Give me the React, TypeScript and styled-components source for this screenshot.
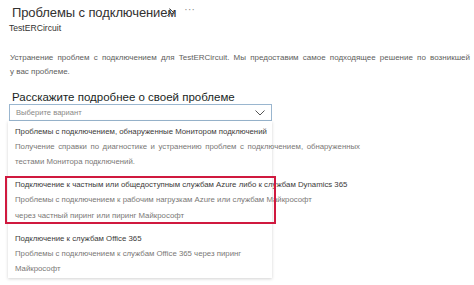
import React from 'react'
import styled, { createGlobalStyle } from 'styled-components'

const GlobalStyle = createGlobalStyle`
   html, body {
      margin: 0;
      padding: 0;
      background: #ffffff;
   }
   body {
      font-family: 'Liberation Sans', Arial, sans-serif;
      color: #323130;
      width: 474px;
      height: 285px;
      overflow: hidden;
   }
`

const Page = styled.div`
   display: flex;
   flex-direction: column;
   padding: 2px 4px 0 10px;
`

const TitleRow = styled.div`
   display: flex;
   align-items: center;
   height: 20px;
   padding-left: 2px;
`

const Title = styled.h1`
   margin: 0;
   font-size: 13px;
   font-weight: 400;
   color: #323130;
   letter-spacing: -0.1px;
`

const PinButton = styled.span`
   display: inline-flex;
   margin-left: -10px;
   margin-top: -1px;
   color: #555;
`

const More = styled.span`
   margin-left: 8px;
   font-size: 10px;
   color: #8a8886;
   letter-spacing: 0.3px;
   line-height: 1;
   margin-top: -4px;
`

const Subtitle = styled.div`
   font-size: 8.6px;
   line-height: 10px;
   color: #323130;
   margin-top: 1px;
   margin-left: -1px;
`

const Description = styled.p`
   margin: 18px 0 0 0;
   font-size: 8px;
   line-height: 14px;
   color: #605e5c;
   width: 460px;
`

const JustifiedLine = styled.span<{ $width?: number }>`
   display: block;
   width: ${(p) => (p.$width ? `${p.$width}px` : 'auto')};
   text-align: justify;
   text-align-last: justify;
   white-space: nowrap;
`

const PlainLine = styled.span`
   display: block;
   white-space: nowrap;
`

const SectionHeading = styled.h2`
   margin: 12px 0 0 2px;
   font-size: 11.5px;
   font-weight: 400;
   color: #201f1e;
   line-height: 13px;
`

const DropdownWrap = styled.div`
   position: relative;
   width: 263px;
   margin-left: -1px;
`

const Select = styled.div`
   box-sizing: border-box;
   height: 17px;
   border: 1px solid #9ab6cf;
   display: flex;
   align-items: center;
   justify-content: space-between;
   padding: 0 6px 0 6px;
   background: #fff;
`

const Placeholder = styled.span`
   font-size: 7.6px;
   color: #8a8886;
`

const Panel = styled.div`
   box-sizing: border-box;
   width: 264px;
   height: 157px;
   margin-left: -1px;
   background: #fff;
   box-shadow: 0 1px 3px rgba(0, 0, 0, 0.18);
   padding: 2.5px 0 0 7px;
   display: flex;
   flex-direction: column;
`

const Option = styled.div`
   display: flex;
   flex-direction: column;
   width: 345px;
   padding-bottom: 7.5px;
`

const OptionTitle = styled.span`
   font-size: 7.8px;
   line-height: 15px;
   color: #3b3a39;
   white-space: nowrap;
`

const OptionText = styled.span`
   font-size: 7.8px;
   line-height: 15.5px;
   color: #7a7876;
`

const Highlight = styled.div`
   position: absolute;
   box-sizing: border-box;
   left: -4px;
   top: 72px;
   width: 271px;
   height: 48px;
   border: 2px solid #d0193f;
   pointer-events: none;
`

const Chevron = () => (
   <svg width="10" height="6" viewBox="0 0 10 6" fill="none">
      <path d="M0.5 0.5L5 5L9.5 0.5" stroke="#555" strokeWidth="1" />
   </svg>
)

const Pin = () => (
   <svg width="10" height="10" viewBox="0 0 10 10" fill="none">
      <path
         d="M3.5 1.5L8.5 6.5M4.3 2.2L3 4.2L5.8 7L7.8 5.7M4.4 5.6L1.3 8.7"
         stroke="#444"
         strokeWidth="1"
      />
   </svg>
)

export default function App() {
   return (
      <>
         <GlobalStyle />
         <Page>
            <TitleRow>
               <Title>Проблемы с подключением</Title>
               <PinButton>
                  <Pin />
               </PinButton>
               <More>···</More>
            </TitleRow>
            <Subtitle>TestERCircuit</Subtitle>
            <Description>
               <JustifiedLine $width={460}>
                  Устранение проблем с подключением для TestERCircuit. Мы
                  предоставим самое подходящее решение по возникшей
               </JustifiedLine>
               <PlainLine>у вас проблеме.</PlainLine>
            </Description>
            <SectionHeading>Расскажите подробнее о своей проблеме</SectionHeading>
            <DropdownWrap>
               <Select>
                  <Placeholder>Выберите вариант</Placeholder>
                  <Chevron />
               </Select>
               <Panel>
                  <Option>
                     <OptionTitle>
                        Проблемы с подключением, обнаруженные Монитором
                        подключений
                     </OptionTitle>
                     <OptionText>
                        <JustifiedLine $width={345}>
                           Получение справки по диагностике и устранению
                           проблем с подключением, обнаруженных
                        </JustifiedLine>
                        <PlainLine>тестами Монитора подключений.</PlainLine>
                     </OptionText>
                  </Option>
                  <Option>
                     <OptionTitle>
                        Подключение к частным или общедоступным службам Azure
                        либо к службам Dynamics 365
                     </OptionTitle>
                     <OptionText>
                        <PlainLine>
                           Проблемы с подключением к рабочим нагрузкам Azure
                           или службам Майкрософт
                        </PlainLine>
                        <PlainLine>
                           через частный пиринг или пиринг Майкрософт
                        </PlainLine>
                     </OptionText>
                  </Option>
                  <Option>
                     <OptionTitle>Подключение к службам Office 365</OptionTitle>
                     <OptionText>
                        <PlainLine>
                           Проблемы с подключением к службам Office 365 через
                           пиринг
                        </PlainLine>
                        <PlainLine>Майкрософт</PlainLine>
                     </OptionText>
                  </Option>
               </Panel>
               <Highlight />
            </DropdownWrap>
         </Page>
      </>
   )
}
